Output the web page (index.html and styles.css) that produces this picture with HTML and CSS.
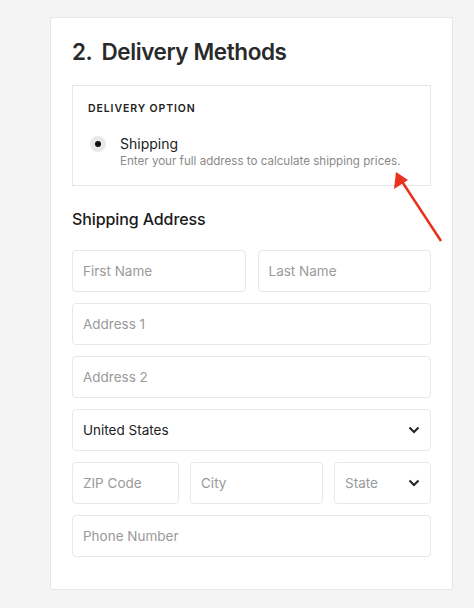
FILE: index.html
```html
<!DOCTYPE html>
<html lang="en">
<head>
    <meta charset="UTF-8">
    <meta name="viewport" content="width=device-width, initial-scale=1.0">
    <title>Checkout - Delivery Methods</title>
    <link rel="stylesheet" href="styles.css">
</head>
<body>
    <div class="card">
        <h1 class="step-title"><span class="step-num">2.</span>Delivery Methods</h1>

        <div class="option-box">
            <div class="option-label">DELIVERY OPTION</div>
            <label class="option">
                <span class="radio"><span class="radio-dot"></span></span>
                <span class="option-text">
                    <span class="option-name">Shipping</span>
                    <span class="option-desc">Enter your full address to calculate shipping prices.</span>
                </span>
            </label>
        </div>

        <h2 class="section-title">Shipping Address</h2>

        <form class="address-form">
            <div class="row two">
                <input type="text" class="field" placeholder="First Name">
                <input type="text" class="field" placeholder="Last Name">
            </div>
            <input type="text" class="field" placeholder="Address 1">
            <input type="text" class="field" placeholder="Address 2">
            <div class="field select">
                <span class="select-value">United States</span>
                <svg class="chevron" width="12" height="8" viewBox="0 0 12 8"><path d="M1.5 1.5 L6 6 L10.5 1.5" fill="none" stroke="#222" stroke-width="2"/></svg>
            </div>
            <div class="row three">
                <input type="text" class="field" placeholder="ZIP Code">
                <input type="text" class="field" placeholder="City">
                <div class="field select">
                    <span class="select-placeholder">State</span>
                    <svg class="chevron" width="12" height="8" viewBox="0 0 12 8"><path d="M1.5 1.5 L6 6 L10.5 1.5" fill="none" stroke="#222" stroke-width="2"/></svg>
                </div>
            </div>
            <input type="tel" class="field" placeholder="Phone Number">
        </form>
    </div>

    <!-- annotation arrow drawn over the screenshot -->
    <svg class="arrow" width="474" height="608" viewBox="0 0 474 608">
        <line x1="441" y1="241" x2="401" y2="180" stroke="#e8321e" stroke-width="2.5"/>
        <polygon points="396,172 394,189 408,180" fill="#e8321e"/>
    </svg>
</body>
</html>
```

FILE: styles.css
```css
body {
    font-family: Inter, "Liberation Sans", Arial, sans-serif;
    background-color: #f4f4f4;
    margin: 0;
    padding: 17px 0 0 0;
    color: #222;
    min-height: 100vh;
    box-sizing: border-box;
}
.card {
    background-color: #fff;
    border: 1px solid #e6e6e6;
    border-radius: 2px;
    margin-left: 50px;
    width: 403px;
    height: 573px;
    box-sizing: border-box;
    padding: 19px 21px 0 21px;
}
.step-title {
    font-size: 22.5px;
    line-height: 30px;
    font-weight: 600;
    color: #2a2a2a;
    margin: 0 0 18px 0;
    letter-spacing: -0.4px;
}
.step-num {
    margin-right: 9px;
}
.option-box {
    border: 1px solid #e6e6e6;
    padding: 15px 15px 16px 15px;
}
.option-label {
    font-size: 10.5px;
    line-height: 16px;
    font-weight: 600;
    letter-spacing: 0.9px;
    color: #222;
}
.option {
    display: flex;
    align-items: flex-start;
    margin-top: 18px;
}
.radio {
    width: 16px;
    height: 16px;
    border-radius: 50%;
    background-color: #e9e9e9;
    display: flex;
    align-items: center;
    justify-content: center;
    margin: 1px 14px 0 2px;
}
.radio-dot {
    width: 6px;
    height: 6px;
    border-radius: 50%;
    background-color: #111;
}
.option-text {
    display: flex;
    flex-direction: column;
}
.option-name {
    font-size: 14px;
    line-height: 18px;
    color: #222;
}
.option-desc {
    font-size: 11.6px;
    line-height: 16px;
    color: #8a8a8a;
}
.section-title {
    font-size: 16px;
    line-height: 22px;
    font-weight: 500;
    color: #1a1a1a;
    margin: 22px 0 20px 0;
    letter-spacing: -0.1px;
}
.address-form {
    display: flex;
    flex-direction: column;
    gap: 11px;
}
.row {
    display: grid;
    gap: 12px;
}
.row.two {
    grid-template-columns: 1fr 1fr;
}
.row.three {
    grid-template-columns: 107px 133px 1fr;
    gap: 11px;
}
.field {
    height: 42px;
    box-sizing: border-box;
    border: 1px solid #e8e8e8;
    border-radius: 4px;
    padding: 0 10px;
    font-family: inherit;
    font-size: 13.5px;
    color: #222;
    background-color: #fff;
    width: 100%;
    outline: none;
}
.field::placeholder {
    color: #9a9a9a;
}
.select {
    display: flex;
    align-items: center;
    justify-content: space-between;
    padding-right: 10px;
}
.select-value {
    color: #222;
}
.select-placeholder {
    color: #9a9a9a;
}
.arrow {
    position: absolute;
    top: 0;
    left: 0;
    pointer-events: none;
}
```
